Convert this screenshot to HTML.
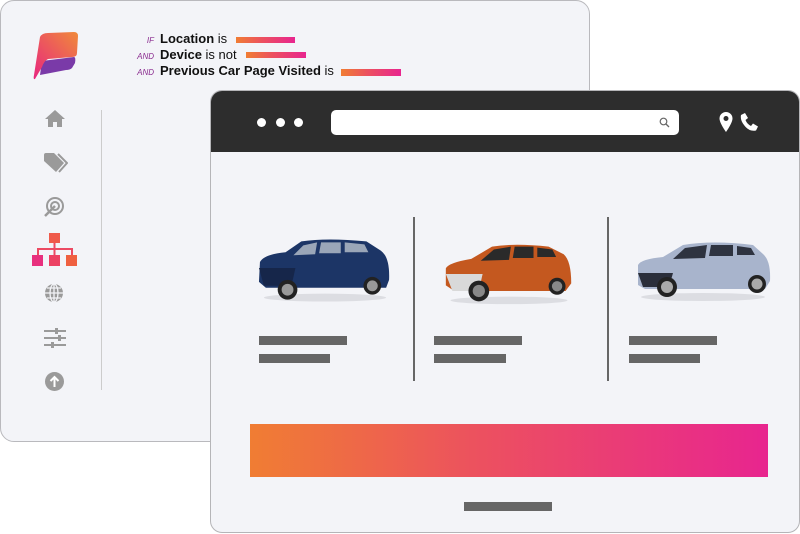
<!DOCTYPE html>
<html><head><style>
*{margin:0;padding:0;box-sizing:border-box}
body{width:800px;height:534px;background:#fff;position:relative;overflow:hidden;font-family:"Liberation Sans",sans-serif}
.abs{position:absolute}
.back{left:0;top:0;width:590px;height:442px;border:1px solid #b9b9bd;border-radius:14px;background:#f3f4f8}
.front{left:210px;top:90px;width:590px;height:443px;border:1px solid #b5b5b8;border-radius:12px;background:#f3f4f8;overflow:hidden}
.hdr{left:0;top:0;width:100%;height:61px;background:#2d2d2d}
.g{background:linear-gradient(90deg,#f07d33,#ec5060 45%,#e8258f)}
.bar{background:#666}
.rule{font-size:13px;color:#111;white-space:nowrap}
.rule i{font-size:8px;color:#8a2b8f;display:inline-block;width:22px;text-align:right;margin-right:6px;font-style:italic}
.rule b{font-weight:700}
</style></head><body>
<div class="abs back"></div>
<svg class="abs" style="left:32px;top:31px" width="48" height="50" viewBox="0 0 48 50">
<defs><linearGradient id="lg" x1="1" y1="0" x2="0" y2="1"><stop offset="0" stop-color="#f08a3a"/><stop offset="1" stop-color="#e8267f"/></linearGradient></defs>
<path d="M10 30 L42 26 Q44 26 43 32 L40 37 Q38 39 34 39 L8 44 Z" fill="#7a3aa8"/>
<path d="M8 6 Q10 2 16 2 L42 1 Q46 1 46 5 L45 22 Q45 26 40 26 L16 28 Q12 30 10 36 L3 48 Q1 49 2 44 Z" fill="url(#lg)"/>
</svg>
<div class="abs rule" style="left:132px;top:31px"><i>IF</i><b>Location</b> is</div>
<div class="abs g" style="left:236px;top:37px;width:59px;height:6px"></div>
<div class="abs rule" style="left:132px;top:47px"><i>AND</i><b>Device</b> is not</div>
<div class="abs g" style="left:246px;top:52px;width:60px;height:6px"></div>
<div class="abs rule" style="left:132px;top:63px"><i>AND</i><b>Previous Car Page Visited</b> is</div>
<div class="abs g" style="left:341px;top:69px;width:60px;height:7px"></div>
<div class="abs" style="left:101px;top:110px;width:1px;height:280px;background:#ccc"></div>
<svg class="abs" style="left:44px;top:108px" width="22" height="20" viewBox="0 0 22 20"><path d="M11 2 L1 11 H4 V19 H9 V14 H13 V19 H18 V11 H21 Z" fill="#9a9a9a"/></svg>
<svg class="abs" style="left:42px;top:152px" width="26" height="22" viewBox="0 0 26 22"><path d="M2 3 Q2 1 4 1 H12 L22 11 L14 20 L2 9 Z" fill="#9a9a9a"/><path d="M16 2 L25 11 L17 20" fill="none" stroke="#9a9a9a" stroke-width="2"/></svg>
<svg class="abs" style="left:43px;top:196px" width="22" height="22" viewBox="0 0 22 22"><circle cx="12" cy="10" r="8" fill="none" stroke="#9a9a9a" stroke-width="2"/><circle cx="12" cy="10" r="4" fill="none" stroke="#9a9a9a" stroke-width="2"/><path d="M12 10 L2 20" stroke="#9a9a9a" stroke-width="2.5"/></svg>
<svg class="abs" style="left:32px;top:233px" width="46" height="34" viewBox="0 0 46 34">
<rect x="17" y="0" width="11" height="10" fill="#ef5a4b"/><path d="M22.5 10 V16 M6 22 V16 H40 V22 M22.5 16 V22" stroke="#ec4a63" stroke-width="2" fill="none"/>
<rect x="0" y="22" width="11" height="11" fill="#e8307e"/><rect x="17" y="22" width="11" height="11" fill="#ec4163"/><rect x="34" y="22" width="11" height="11" fill="#ef6040"/></svg>
<svg class="abs" style="left:44px;top:283px" width="20" height="20" viewBox="0 0 20 20"><circle cx="10" cy="10" r="9" fill="#9a9a9a"/><path d="M1 10 H19 M10 1 V19 M3 5 H17 M3 15 H17" stroke="#f3f4f8" stroke-width="1.3"/><ellipse cx="10" cy="10" rx="4" ry="9" fill="none" stroke="#f3f4f8" stroke-width="1.3"/></svg>
<svg class="abs" style="left:43px;top:328px" width="24" height="20" viewBox="0 0 24 20"><path d="M1 3 H23 M1 10 H23 M1 17 H23" stroke="#9a9a9a" stroke-width="2"/><rect x="12" y="0" width="3" height="6" fill="#9a9a9a"/><rect x="15" y="7" width="3" height="6" fill="#9a9a9a"/><rect x="8" y="14" width="3" height="6" fill="#9a9a9a"/></svg>
<svg class="abs" style="left:45px;top:372px" width="19" height="19" viewBox="0 0 19 19"><circle cx="9.5" cy="9.5" r="9.5" fill="#9a9a9a"/><path d="M9.5 15 V5 M5.5 9 L9.5 5 L13.5 9" stroke="#fff" stroke-width="2" fill="none"/></svg>

<div class="abs front">
 <div class="abs hdr">
  <div class="abs" style="left:46px;top:27px;width:9px;height:9px;border-radius:50%;background:#fff"></div>
  <div class="abs" style="left:65px;top:27px;width:9px;height:9px;border-radius:50%;background:#fff"></div>
  <div class="abs" style="left:83px;top:27px;width:9px;height:9px;border-radius:50%;background:#fff"></div>
  <div class="abs" style="left:120px;top:19px;width:348px;height:25px;background:#fff;border-radius:5px"></div>
  <svg class="abs" style="left:448px;top:26px" width="11" height="11" viewBox="0 0 11 11"><circle cx="4.5" cy="4.5" r="3.3" fill="none" stroke="#666" stroke-width="1.2"/><path d="M7 7 L10 10" stroke="#666" stroke-width="1.3"/></svg>
  <svg class="abs" style="left:508px;top:21px" width="14" height="20" viewBox="0 0 14 20"><path d="M7 0 A6.5 6.5 0 0 1 13.5 6.5 C13.5 11 7 20 7 20 C7 20 0.5 11 0.5 6.5 A6.5 6.5 0 0 1 7 0Z" fill="#fff"/><circle cx="7" cy="6.5" r="2.5" fill="#2d2d2d"/></svg>
  <svg class="abs" style="left:528px;top:21px" width="20" height="20" viewBox="0 0 20 20"><path d="M2 3 L6 1 L9 6 L6.5 8 Q8 12 12 14 L14 11.5 L19 14.5 L17 18.5 Q10 20 5 13 Q1 8 2 3Z" fill="#fff"/></svg>
 </div>
 <div class="abs" style="left:202px;top:126px;width:2px;height:164px;background:#666"></div>
 <div class="abs" style="left:396px;top:126px;width:2px;height:164px;background:#666"></div>
 <svg class="abs" style="left:45px;top:147px" width="138" height="66" viewBox="0 0 140 66"><ellipse cx="70" cy="60" rx="62" ry="4" fill="#dcdde2"/><path d="M4 24 Q8 16 30 14 L46 3 Q72 -1 112 3 L126 12 Q136 18 135 42 L132 50 H10 L3 44 Z" fill="#1c3566"/><path d="M48 7 L62 4 L60 16 L38 17Z M66 4 H86 L86 15 H64Z M90 4 L110 6 L114 14 H90Z" fill="#9aa6b8"/><path d="M3 30 H40 L36 48 H8Z" fill="#16264a"/><circle cx="32" cy="52" r="10" fill="#222"/><circle cx="32" cy="52" r="6" fill="#999"/><circle cx="118" cy="48" r="9" fill="#222"/><circle cx="118" cy="48" r="5.5" fill="#999"/></svg>
 <svg class="abs" style="left:232px;top:149px" width="132" height="68" viewBox="0 0 140 68"><ellipse cx="70" cy="62" rx="62" ry="4" fill="#dcdde2"/><path d="M3 28 Q6 22 30 18 L52 5 Q76 1 112 5 L128 13 Q136 20 136 44 L130 52 H12 L3 46 Z" fill="#c4581f"/><path d="M54 8 L72 5 L70 19 L40 20Z M76 5 H96 L96 17 H74Z M100 6 L116 8 L120 16 H100Z" fill="#2a2a2a"/><path d="M3 34 H42 L38 52 H10Z" fill="#d9d9d9"/><circle cx="38" cy="52" r="11" fill="#222"/><circle cx="38" cy="52" r="6.5" fill="#888"/><circle cx="121" cy="47" r="9" fill="#222"/><circle cx="121" cy="47" r="5.5" fill="#888"/></svg>
 <svg class="abs" style="left:422px;top:150px" width="140" height="62" viewBox="0 0 140 62"><ellipse cx="70" cy="56" rx="62" ry="4" fill="#dcdde2"/><path d="M5 24 Q8 18 30 16 L50 4 Q80 -1 120 4 L130 13 Q138 20 137 40 L132 48 H12 L5 44 Z" fill="#a8b4cc"/><path d="M52 7 L74 4 L72 17 L40 18Z M78 4 H100 L100 15 H76Z M104 5 L118 7 L122 14 H104Z" fill="#2e3340"/><path d="M5 32 H40 L36 46 H10Z" fill="#2a2e3a"/><circle cx="34" cy="46" r="10" fill="#222"/><circle cx="34" cy="46" r="6" fill="#aaa"/><circle cx="124" cy="43" r="9" fill="#222"/><circle cx="124" cy="43" r="5.5" fill="#aaa"/></svg>
 <div class="abs bar" style="left:48px;top:245px;width:88px;height:9px"></div>
 <div class="abs bar" style="left:48px;top:263px;width:71px;height:9px"></div>
 <div class="abs bar" style="left:223px;top:245px;width:88px;height:9px"></div>
 <div class="abs bar" style="left:223px;top:263px;width:72px;height:9px"></div>
 <div class="abs bar" style="left:418px;top:245px;width:88px;height:9px"></div>
 <div class="abs bar" style="left:418px;top:263px;width:71px;height:9px"></div>
 <div class="abs g" style="left:39px;top:333px;width:518px;height:53px"></div>
 <div class="abs bar" style="left:253px;top:411px;width:88px;height:9px"></div>
</div>
</body></html>
